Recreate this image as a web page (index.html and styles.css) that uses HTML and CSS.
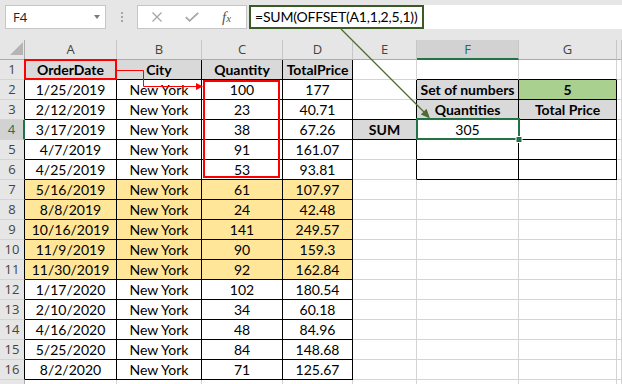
FILE: index.html
```html
<!DOCTYPE html>
<html>
<head>
<meta charset="utf-8">
<link rel="stylesheet" href="styles.css">
</head>
<body>
<div class="app">
  <div class="toolbar">
    <div class="namebox"><span class="ref">F4</span><span class="caret"></span></div>
    <div class="grip"><i></i><i></i><i></i></div>
    <div class="fbtns">
      <svg class="ico-x" width="12" height="10" viewBox="0 0 12 10"><path d="M1.5 0.5 L10.5 9.5 M10.5 0.5 L1.5 9.5" stroke="#a6a6a6" stroke-width="1.3" fill="none"/></svg>
      <svg class="ico-ok" width="14" height="10" viewBox="0 0 14 10"><path d="M0.8 5.2 L4.6 8.8 L13.2 0.8" stroke="#a6a6a6" stroke-width="1.8" fill="none"/></svg>
      <span class="fx">f<span class="fxs">x</span></span>
    </div>
    <div class="fbar"><span class="formula">=SUM(OFFSET(A1,1,2,5,1))</span></div>
  </div>
  <div class="sheet">
    <div class="corner"><i class="tri"></i></div><div class="ch">A</div><div class="ch">B</div><div class="ch">C</div><div class="ch">D</div><div class="ch">E</div><div class="ch sel">F</div><div class="ch">G</div><div class="ch"></div>
    <div class="rh k">1</div><div class="b hd">OrderDate</div><div class="b hd">City</div><div class="b hd">Quantity</div><div class="b hd">TotalPrice</div><div></div><div class="bb"></div><div class="bb"></div><div></div>
    <div class="rh k">2</div><div class="b">1/25/2019</div><div class="b">New York</div><div class="b">100</div><div class="b">177</div><div class="br"></div><div class="b hd">Set of numbers</div><div class="b g">5</div><div></div>
    <div class="rh k">3</div><div class="b">2/12/2019</div><div class="b">New York</div><div class="b">23</div><div class="b">40.71</div><div class="br bb"></div><div class="b hd">Quantities</div><div class="b hd">Total Price</div><div></div>
    <div class="rh sel">4</div><div class="b">3/17/2019</div><div class="b">New York</div><div class="b">38</div><div class="b">67.26</div><div class="b hd">SUM</div><div class="b">305</div><div class="b"></div><div></div>
    <div class="rh k">5</div><div class="b">4/7/2019</div><div class="b">New York</div><div class="b">91</div><div class="b">161.07</div><div class="br"></div><div class="b"></div><div class="b"></div><div></div>
    <div class="rh k">6</div><div class="b">4/25/2019</div><div class="b">New York</div><div class="b">53</div><div class="b">93.81</div><div class="br"></div><div class="b"></div><div class="b"></div><div></div>
    <div class="rh k">7</div><div class="b y">5/16/2019</div><div class="b y">New York</div><div class="b y">61</div><div class="b y">107.97</div><div></div><div></div><div></div><div></div>
    <div class="rh k">8</div><div class="b y">8/8/2019</div><div class="b y">New York</div><div class="b y">24</div><div class="b y">42.48</div><div></div><div></div><div></div><div></div>
    <div class="rh k">9</div><div class="b y">10/16/2019</div><div class="b y">New York</div><div class="b y">141</div><div class="b y">249.57</div><div></div><div></div><div></div><div></div>
    <div class="rh k">10</div><div class="b y">11/9/2019</div><div class="b y">New York</div><div class="b y">90</div><div class="b y">159.3</div><div></div><div></div><div></div><div></div>
    <div class="rh k">11</div><div class="b y">11/30/2019</div><div class="b y">New York</div><div class="b y">92</div><div class="b y">162.84</div><div></div><div></div><div></div><div></div>
    <div class="rh k">12</div><div class="b">1/17/2020</div><div class="b">New York</div><div class="b">102</div><div class="b">180.54</div><div></div><div></div><div></div><div></div>
    <div class="rh k">13</div><div class="b">2/10/2020</div><div class="b">New York</div><div class="b">34</div><div class="b">60.18</div><div></div><div></div><div></div><div></div>
    <div class="rh k">14</div><div class="b">4/16/2020</div><div class="b">New York</div><div class="b">48</div><div class="b">84.96</div><div></div><div></div><div></div><div></div>
    <div class="rh k">15</div><div class="b">5/25/2020</div><div class="b">New York</div><div class="b">84</div><div class="b">148.68</div><div></div><div></div><div></div><div></div>
    <div class="rh k">16</div><div class="b">8/2/2020</div><div class="b">New York</div><div class="b">71</div><div class="b">125.67</div><div></div><div></div><div></div><div></div>
    <div class="rh"></div><div></div><div></div><div></div><div></div><div></div><div></div><div></div><div></div>
  </div>
  <svg class="annot" width="622" height="384" viewBox="0 0 622 384">
    <rect x="25" y="60" width="91" height="19" fill="none" stroke="#ff0000" stroke-width="2"/>
    <rect x="204" y="81" width="75" height="96" fill="none" stroke="#ff0000" stroke-width="2"/>
    <polyline points="117,70.5 143.5,70.5 143.5,86.5 197,86.5" fill="none" stroke="#ff0000" stroke-width="1"/>
    <polygon points="203,86.5 196,83 196,90" fill="#ff0000"/>
    <line x1="341" y1="29" x2="424" y2="112" stroke="#4f6b31" stroke-width="1.2"/>
    <polygon points="430,118.5 420.8,114.4 426.5,108.8" fill="#4f6b31"/>
    <rect x="417" y="119" width="102" height="20" fill="none" stroke="#217346" stroke-width="2"/>
    <rect x="516" y="136.5" width="6" height="6" fill="#217346" stroke="#ffffff" stroke-width="1"/>
  </svg>
</div>
</body>
</html>
```
FILE: styles.css
```css
* { box-sizing: border-box; margin: 0; padding: 0; }
body { margin: 0; background: #ffffff; }
.app {
  position: relative;
  width: 622px;
  height: 384px;
  overflow: hidden;
  background: #e6e6e6;
  font-family: Lato, "Liberation Sans", sans-serif;
}
.toolbar {
  height: 40px;
  display: flex;
  align-items: flex-start;
  padding-top: 5px;
  background: #e6e6e6;
}
.namebox {
  margin-left: 5px;
  width: 101px;
  height: 24px;
  background: #ffffff;
  border: 1px solid #c6c6c6;
  display: flex;
  align-items: center;
  padding-left: 7px;
  padding-right: 5px;
}
.ref {
  font-family: "Open Sans", sans-serif;
  font-size: 13px;
  color: #222222;
}
.caret {
  margin-left: auto;
  width: 0;
  height: 0;
  border-left: 3.5px solid transparent;
  border-right: 3.5px solid transparent;
  border-top: 4px solid #7a7a7a;
}
.grip {
  width: 31px;
  height: 24px;
  display: flex;
  flex-direction: column;
  align-items: center;
  justify-content: center;
  gap: 2px;
}
.grip i {
  display: block;
  width: 2px;
  height: 2px;
  background: #a6a6a6;
}
.fbtns {
  width: 110px;
  height: 24px;
  background: #ffffff;
  border: 1px solid #c6c6c6;
  display: flex;
  align-items: center;
  padding-left: 13px;
}
.ico-ok { margin-left: 22px; }
.fx {
  margin-left: 23px;
  font-family: "Liberation Serif", serif;
  font-style: italic;
  font-size: 15px;
  color: #555555;
  line-height: 1;
}
.fxs { font-size: 11px; }
.fbar {
  margin-left: 2px;
  flex: 1;
  height: 24px;
  background: #ffffff;
}
.formula {
  display: block;
  width: 175px;
  height: 24px;
  border: 2px solid #3b5b25;
  padding-left: 4px;
  font-family: Lato, sans-serif;
  font-size: 14px;
  letter-spacing: -0.2px;
  line-height: 20px;
  color: #000000;
  white-space: nowrap;
}
.sheet {
  display: grid;
  grid-template-columns: 25px 92px 85px 81px 70px 64px 102px 98px 5px;
  grid-auto-rows: 20px;
  background: #ffffff;
}
.sheet > div {
  border-right: 1px solid #d4d4d4;
  border-bottom: 1px solid #d4d4d4;
  font-size: 14px;
  line-height: 19px;
  text-align: center;
  white-space: nowrap;
  overflow: hidden;
  color: #000000;
}
.sheet > .corner {
  background: #e6e6e6;
  border-right-color: #ababab;
  border-bottom-color: #ababab;
  display: flex;
  justify-content: flex-end;
  align-items: flex-end;
  padding: 0 1px 4px 0;
}
.tri {
  display: block;
  width: 0;
  height: 0;
  border-left: 13px solid transparent;
  border-bottom: 13px solid #b4b4b4;
}
.sheet > .ch {
  background: #e6e6e6;
  border-right-color: #c6c6c6;
  border-bottom-color: #ababab;
  font-family: "Open Sans", sans-serif;
  font-size: 13px;
  color: #444444;
}
.sheet > .ch.sel {
  background: #d2d2d2;
  border-bottom: 2px solid #217346;
  color: #217346;
  line-height: 18px;
}
.sheet > .rh {
  background: #e6e6e6;
  border-right-color: #ababab;
  border-bottom-color: #d4d4d4;
  font-family: "Open Sans", sans-serif;
  font-size: 13px;
  color: #444444;
}
.sheet > .rh.k { border-right-color: #000000; }
.sheet > .rh.sel {
  background: #d2d2d2;
  border-right: 2px solid #217346;
  color: #217346;
}
.sheet > .b { border-right-color: #000000; border-bottom-color: #000000; }
.sheet > .br { border-right-color: #000000; }
.sheet > .bb { border-bottom-color: #000000; }
.sheet > .hd { background: #d9d9d9; font-weight: 700; }
.sheet > .y { background: #ffe699; }
.sheet > .g { background: #a9d08e; font-weight: 700; }
.annot {
  position: absolute;
  left: 0;
  top: 0;
  pointer-events: none;
}
```
